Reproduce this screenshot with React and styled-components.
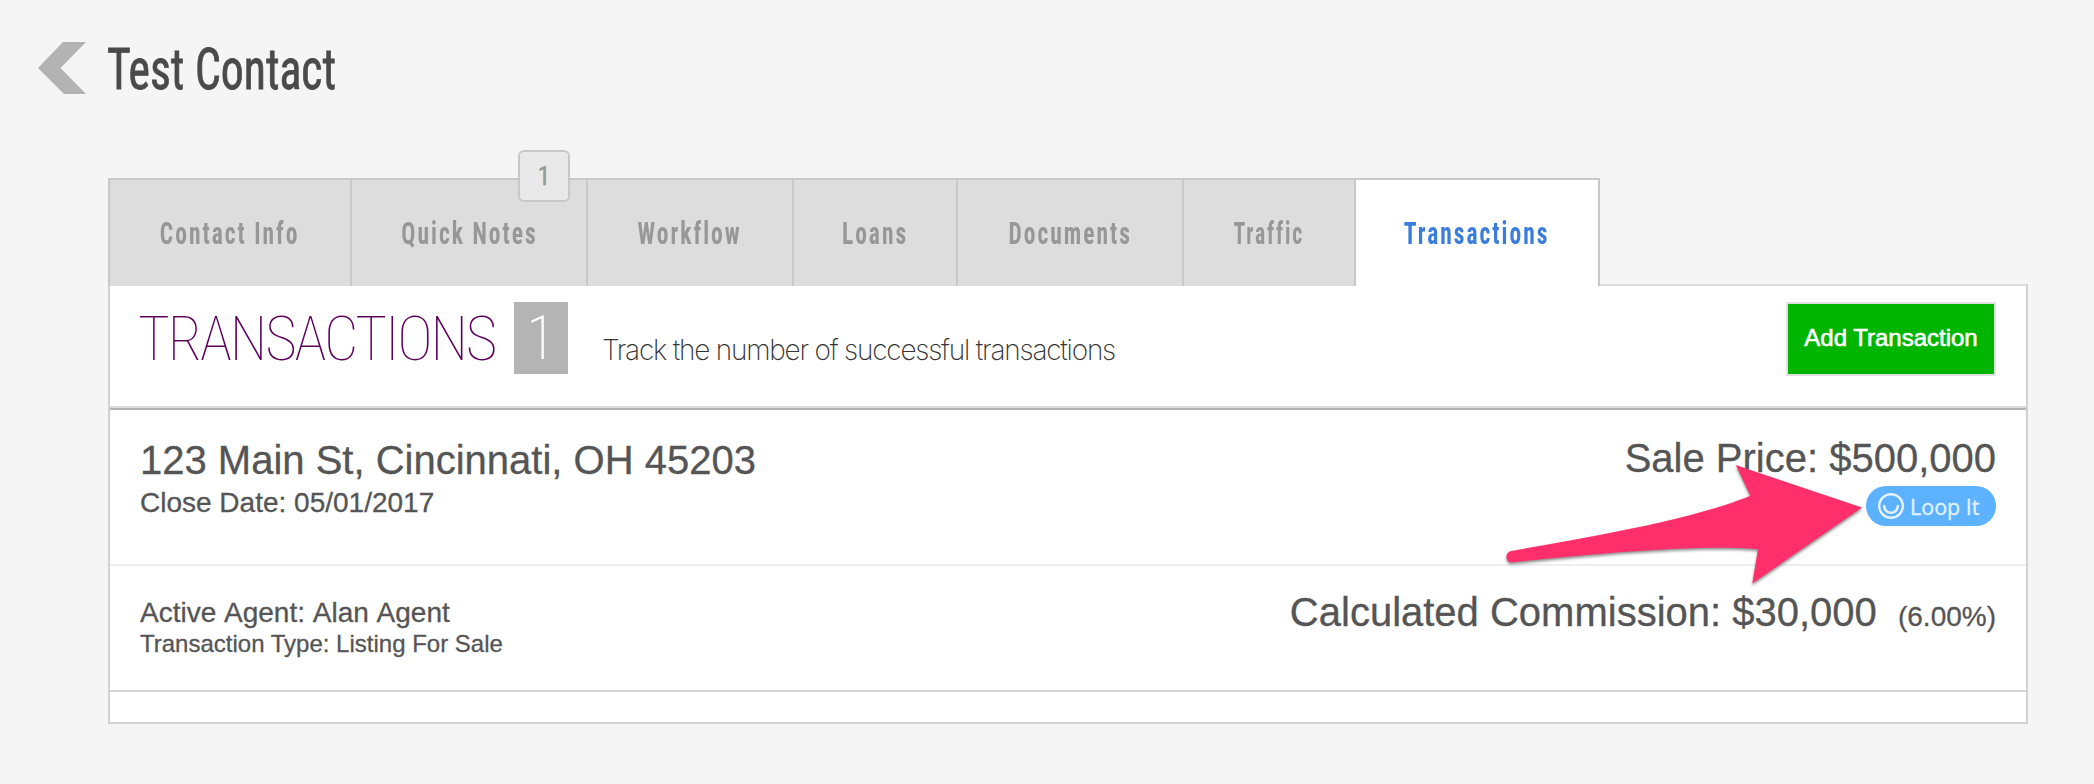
import React from 'react'
import styled, { createGlobalStyle } from 'styled-components'

const tabs = [
  { label: 'Contact Info', width: 242 },
  { label: 'Quick Notes', width: 236, count: 1 },
  { label: 'Workflow', width: 206 },
  { label: 'Loans', width: 164 },
  { label: 'Documents', width: 226 },
  { label: 'Traffic', width: 172, scale: 0.71 },
  { label: 'Transactions', width: 242, active: true },
]

export default function App() {
  return (
    <Page>
      <GlobalStyle />
      <TitleBar>
        <BackIcon viewBox="0 0 48 52">
          <path d="M0 26 L25 0 H48 L22.5 26 L48 52 H26 Z" fill="#b3b3b3" />
        </BackIcon>
        <Title><Narrow $scale={0.795}>Test Contact</Narrow></Title>
      </TitleBar>

      <Tabs>
        {tabs.map(tab => (
          <Tab key={tab.label} $width={tab.width} $active={tab.active}>
            <TabLabel $scale={tab.scale || 0.77}>{tab.label}</TabLabel>
            {tab.count && <Badge>{tab.count}</Badge>}
          </Tab>
        ))}
      </Tabs>

      <Panel>
        <PanelHeader>
          <Heading>TRANSACTIONS</Heading>
          <Count>1</Count>
          <Tagline>Track the number of successful transactions</Tagline>
          <AddButton>Add Transaction</AddButton>
        </PanelHeader>

        <Row>
          <div>
            <Address>123 Main St, Cincinnati, OH 45203</Address>
            <Detail>Close Date: 05/01/2017</Detail>
          </div>
          <Right>
            <Amount>Sale Price: $500,000</Amount>
            <LoopButton>
              <LoopIcon viewBox="0 0 26 26">
                <circle cx="13" cy="13" r="11.8" />
                <path d="M6.2 13 A6.8 6.8 0 0 0 19.8 13" />
              </LoopIcon>
              Loop It
            </LoopButton>
          </Right>
        </Row>

        <LastRow>
          <Agent>
            <Detail>Active Agent: Alan Agent</Detail>
            <Type>Transaction Type: Listing For Sale</Type>
          </Agent>
          <Amount>Calculated Commission: $30,000 <Percent>(6.00%)</Percent></Amount>
        </LastRow>
      </Panel>

      <Arrow viewBox="1500 460 370 130">
        <path d="M1511.3 551 C1580 538.500 1690 521 1750.300 495.700 L1735.800 465 L1862 507.500 L1752.300 583.500 L1758 549.300 C1700 544.500 1610 552.500 1512.300 562.300 C1504.800 562.500 1504.500 552.500 1511.300 551 Z" fill="#ff2f6b" />
      </Arrow>
    </Page>
  );
}

const GlobalStyle = createGlobalStyle`
    body{
        margin:0;
        background:#f5f5f5;
    }
    *{
        box-sizing:border-box;
    }
`

const Page = styled.div`
    position:relative;
    width:2094px;
    height:784px;
    padding:40px 66px 0 38px;
    overflow:hidden;
    background:#f5f5f5;
    color:#555;
    font-family:"Liberation Sans", Arial, sans-serif;
`

const TitleBar = styled.div`
    display:flex;
    align-items:flex-start;
    height:138px;
`

const BackIcon = styled.svg`
    width:48px;
    height:52px;
    margin-top:2px;
    margin-right:21px;
`

const Title = styled.h1`
    margin:0;
    font-family:"Roboto Condensed", Roboto, sans-serif;
    font-stretch:75%;
    font-size:57.5px;
    line-height:60px;
    font-weight:400;
    -webkit-text-stroke:0.8px #4a4a4a;
    color:#4a4a4a;
`

const Narrow = styled.span`
    display:inline-block;
    white-space:nowrap;
    transform:scaleX(${p => p.$scale});
    transform-origin:left;
`

const Tabs = styled.div`
    position:relative;
    z-index:1;
    display:flex;
    width:1492px;
    height:108px;
    margin-left:70px;
    border:2px solid #c8c8c8;
    border-bottom:none;
`

const Tab = styled.div`
    position:relative;
    display:flex;
    flex:none;
    width:${p => p.$width}px;
    align-items:center;
    justify-content:center;
    background:${p => p.$active ? '#fff' : '#ddd'};
    color:${p => p.$active ? '#3b7ddd' : '#979797'};
    border-right:${p => p.$active ? 'none' : '2px solid #c8c8c8'};
    font-family:"Roboto Condensed", Roboto, sans-serif;
    font-stretch:75%;
    font-size:30.5px;
    font-weight:700;
`

const TabLabel = styled(Narrow)`
    letter-spacing:2.6px;
    transform-origin:center;
`

//sits over the top edge of the tab
const Badge = styled.div`
    position:absolute;
    top:-30px;
    right:16px;
    display:flex;
    align-items:center;
    justify-content:center;
    width:52px;
    height:52px;
    background:#e9e9e9;
    border:2px solid #c8c8c8;
    border-radius:6px;
    font-size:25px;
    font-weight:400;
    -webkit-text-stroke:0.4px;
`

const Panel = styled.div`
    width:1920px;
    height:440px;
    margin-left:70px;
    margin-top:-2px;
    background:#fff;
    border:2px solid #d2d2d2;
    border-top-color:#ddd;
`

const PanelHeader = styled.div`
    display:flex;
    align-items:flex-start;
    height:124px;
    padding:16px 30px 0;
    border-bottom:2px solid #b2b2b2;
    box-shadow:inset 0 -2px 0 #ddd;
`

const Heading = styled.h2`
    width:376px;
    margin:0 0 0 -2px;
    padding-top:2px;
    font-family:"Roboto Condensed", Roboto, sans-serif;
    font-stretch:75%;
    font-size:60.5px;
    line-height:72px;
    font-weight:100;
    letter-spacing:-2.15px;
    color:#5c005c;
`

const Count = styled.div`
    width:54px;
    height:72px;
    padding-top:1px;
    background:#b4b4b4;
    color:#fff;
    font-family:"Roboto Condensed", Roboto, sans-serif;
    font-stretch:75%;
    font-size:60.5px;
    line-height:72px;
    font-weight:200;
    text-align:center;
`

const Tagline = styled.div`
    margin-left:34px;
    padding-top:31px;
    font-family:Inter, sans-serif;
    font-size:28px;
    line-height:34px;
    font-weight:250;
    letter-spacing:-1.22px;
    color:#333;
`

const AddButton = styled.div`
    width:210px;
    height:74px;
    margin-left:auto;
    background:#00b500;
    border:2px solid #e0e0e0;
    color:#fff;
    font-size:24px;
    line-height:67px;
    text-align:center;
    -webkit-text-stroke:0.6px #fff;
`

const Row = styled.div`
    display:flex;
    justify-content:space-between;
    height:156px;
    padding:30px 30px 0;
    border-bottom:2px solid #eee;
    -webkit-text-stroke:0.3px;
`

const LastRow = styled(Row)`
    height:126px;
    padding-top:26px;
    border-bottom-color:#d2d2d2;
`

const Right = styled.div`
    display:flex;
    flex-direction:column;
    align-items:flex-end;
    margin-top:-2px;
`

const Address = styled.div`
    font-size:40px;
    line-height:40px;
    margin-bottom:7px;
`

const Amount = styled.div`
    font-size:40px;
    line-height:40px;
    white-space:nowrap;
`

const Percent = styled.span`
    margin-left:10px;
    font-size:28px;
`

const Agent = styled.div`
    padding-top:5px;
`

const Detail = styled.div`
    font-size:28px;
    line-height:32px;
    font-kerning:none;
`

const Type = styled.div`
    margin-top:1px;
    font-size:24px;
    line-height:28px;
`

const LoopButton = styled.div`
    display:flex;
    align-items:center;
    width:130px;
    height:40px;
    margin-top:8px;
    padding-left:12px;
    background:#5cb2ff;
    border-radius:20px;
    color:#e3f2ff;
    font-family:"Open Sans", sans-serif;
    font-size:21.5px;
    white-space:nowrap;
`

const LoopIcon = styled.svg`
    width:26px;
    height:26px;
    margin-right:6px;
    fill:none;
    stroke:#e6f3ff;
    stroke-width:2.4;
    stroke-linecap:round;
`

//pointer drawn over the rows
const Arrow = styled.svg`
    position:absolute;
    z-index:2;
    left:1500px;
    top:460px;
    width:370px;
    height:130px;
    overflow:visible;
    filter:drop-shadow(0 2px 1.5px rgba(0,0,0,0.45));
`
